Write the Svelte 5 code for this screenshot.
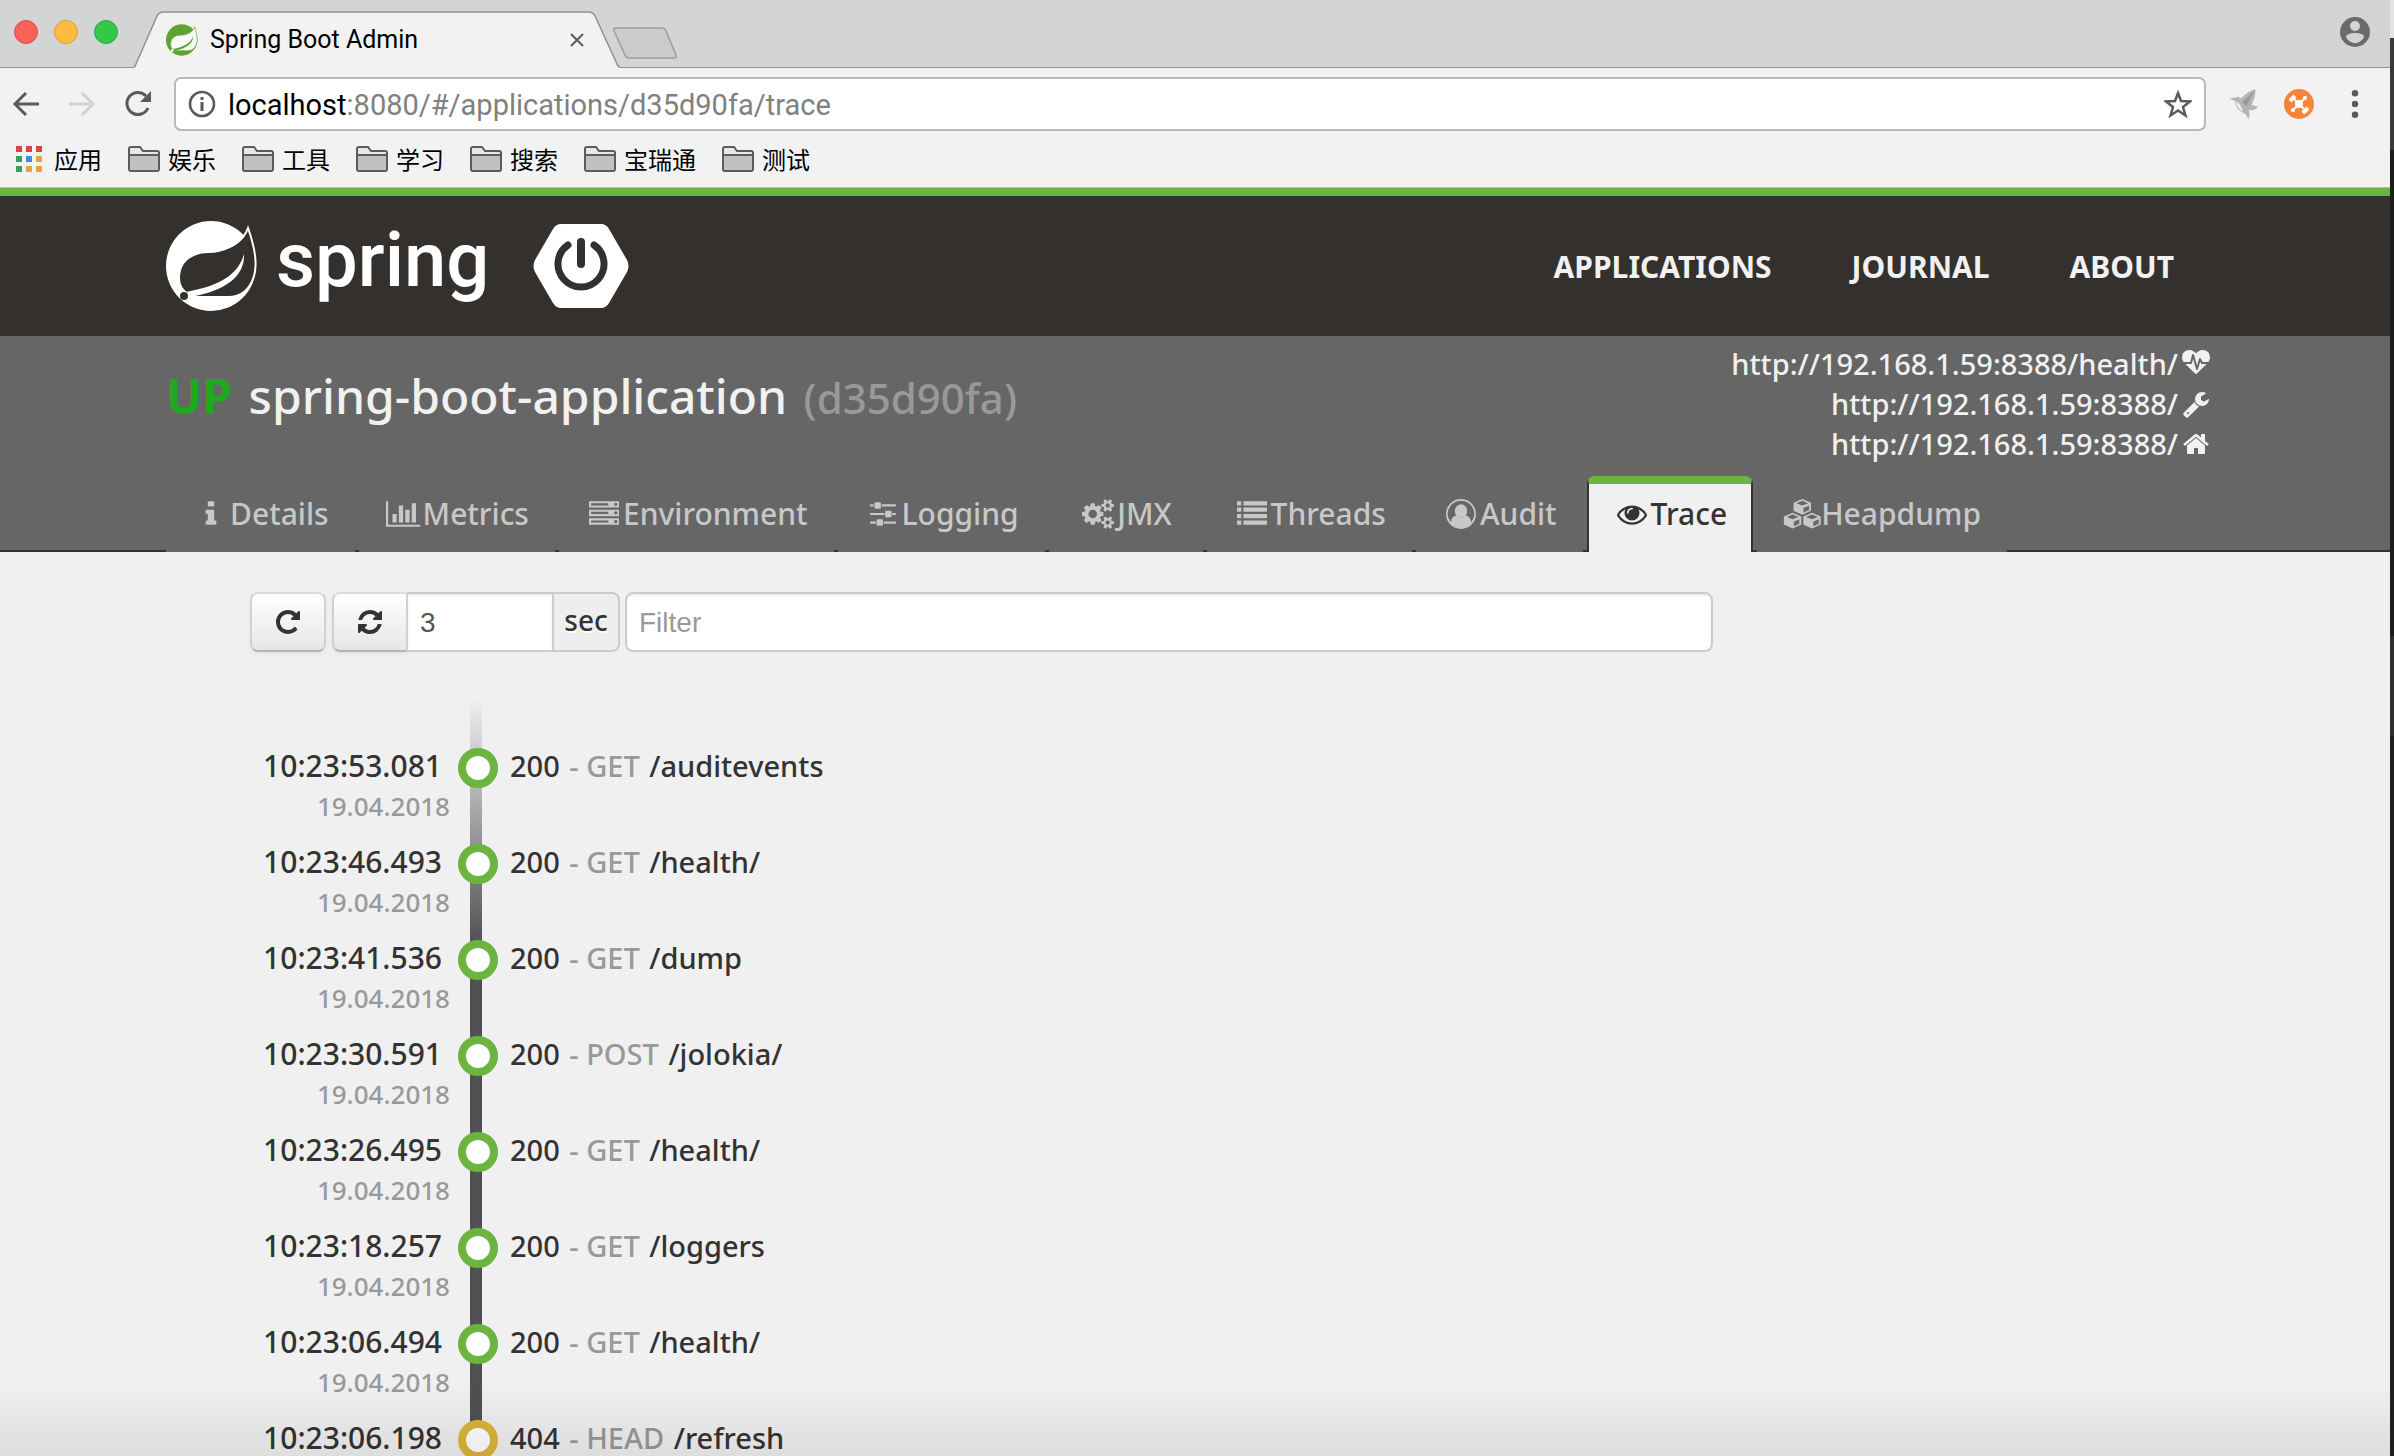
<script lang="ts">
  type Icon = { width: number; d: string };

  type Trace = {
    time: string;
    status: number;
    method: string;
    path: string;
  };

  const cube = (x: number, y: number) =>
    `M${x} ${y}m0-450l520 220v480l-520 240l-520-240v-480z` +
    `m0 110l-350 140l350 140l350-140zm75 430v270l330-150v-270z`;

  const smallGear =
    "v140q0 16-149 31-12 27-30 52 51 113 51 138 0 4-4 7-122 71-124 71-8 0-46-47t-52-68q-20 2-30 2t-30-2q-14 21-52 68t-46 47q-2 0-124-71-4-3-4-7 0-25 51-138-18-25-30-52-149-15-149-31v-140q0-16 149-31 13-29 30-52-51-113-51-138 0-4 4-7 4-2 35-20t59-34 30-16q8 0 46 46.5t52 67.5q20-2 30-2t30 2q51-71 92-112l6-2q4 0 124 70 4 3 4 7 0 25-51 138 17 23 30 52 149 15 149 31z";

  const icons: Record<string, Icon> = {
    info: {
      width: 1792,
      d: "M1216 1344v128q0 26-19 45t-45 19h-512q-26 0-45-19t-19-45v-128q0-26 19-45t45-19h64v-384h-64q-26 0-45-19t-19-45v-128q0-26 19-45t45-19h384q26 0 45 19t19 45v576h64q26 0 45 19t19 45zm-128-1152v192q0 26-19 45t-45 19h-256q-26 0-45-19t-19-45v-192q0-26 19-45t45-19h256q26 0 45 19t19 45z",
    },
    chart: {
      width: 2048,
      d: "M640 896v512h-256v-512h256zm384-512v1024h-256v-1024h256zm1024 1152v128h-2048v-1536h128v1408h1920zm-640-896v768h-256v-768h256zm384-384v1152h-256v-1152h256z",
    },
    server: {
      width: 1792,
      d: "M128 1408h1024v-128h-1024v128zm0-512h1024v-128h-1024v128zm1568 448q0-40-28-68t-68-28-68 28-28 68 28 68 68 28 68-28 28-68zm-1568-960h1024v-128h-1024v128zm1568 448q0-40-28-68t-68-28-68 28-28 68 28 68 68 28 68-28 28-68zm0-512q0-40-28-68t-68-28-68 28-28 68 28 68 68 28 68-28 28-68zm96 832v384h-1792v-384h1792zm0-512v384h-1792v-384h1792zm0-512v384h-1792v-384h1792z",
    },
    sliders: {
      width: 1792,
      d: "M128 320h208v128H128zM816 320h848v128H816zM448 192h256q64 0 64 64v256q0 64-64 64H448q-64 0-64-64V256q0-64 64-64zM128 832h848v128H128zM1456 832h208v128h-208zM1088 704h256q64 0 64 64v256q0 64-64 64h-256q-64 0-64-64V768q0-64 64-64zM128 1344h336v128H128zM944 1344h720v128H944zM576 1216h256q64 0 64 64v256q0 64-64 64H576q-64 0-64-64v-256q0-64 64-64z",
    },
    cogs: {
      width: 1920,
      d:
        "M896 896q0-106-75-181t-181-75-181 75-75 181 75 181 181 75 181-75 75-181zm768 512q0-52-38-90t-90-38-90 38-38 90q0 53 37.5 90.5t90.5 37.5 90.5-37.5 37.5-90.5zm0-1024q0-52-38-90t-90-38-90 38-38 90q0 53 37.5 90.5t90.5 37.5 90.5-37.5 37.5-90.5zm-384 421v185q0 10-7 19.5t-16 10.5l-155 24q-11 35-32 76 34 48 90 115 7 11 7 20 0 12-7 19-23 30-82.5 89.5t-78.5 59.5q-11 0-21-7l-115-90q-37 19-77 31-11 108-23 155-7 24-30 24h-186q-11 0-20-7.5t-10-17.5l-23-153q-34-10-75-31l-118 89q-7 7-20 7-11 0-21-8-144-133-144-160 0-9 7-19 10-14 41-53t47-61q-23-44-35-82l-152-24q-10-1-17-9.5t-7-19.5v-185q0-10 7-19.5t16-10.5l155-24q11-35 32-76-34-48-90-115-7-11-7-20 0-12 7-20 22-30 82-89t79-59q11 0 21 7l115 90q34-18 77-32 11-108 23-154 7-24 30-24h186q11 0 20 7.5t10 17.5l23 153q34 10 75 31l118-89q8-7 20-7 11 0 21 8 144 133 144 160 0 8-7 19-12 16-42 54t-45 60q23 48 34 82l152 23q10 2 17 10.5t7 19.5z" +
        `M1920 1338${smallGear}M1920 314${smallGear}`,
    },
    list: {
      width: 1792,
      d: "M0 128h256v256H0zM384 128h1408v256H384zM0 512h256v256H0zM384 512h1408v256H384zM0 896h256v256H0zM384 896h1408v256H384zM0 1280h256v256H0zM384 1280h1408v256H384z",
    },
    user: {
      width: 1792,
      d: "M896 0a896 896 0 1 1 0 1792a896 896 0 1 1 0-1792zM896 110a786 786 0 0 0-610 1282c40-250 150-390 320-410a420 420 0 0 0 580 0c170 20 280 160 320 410a786 786 0 0 0-610-1282zM896 320a370 400 0 1 1 0 800a370 400 0 1 1 0-800z",
    },
    eye: {
      width: 1792,
      d: "M1664 960q-152-236-381-353 61 104 61 225 0 185-131.5 316.5t-316.5 131.5-316.5-131.5-131.5-316.5q0-121 61-225-229 117-381 353 133 205 333.5 326.5t434.5 121.5 434.5-121.5 333.5-326.5zm-720-384q0-20-14-34t-34-14q-125 0-214.5 89.5t-89.5 214.5q0 20 14 34t34 14 34-14 14-34q0-86 61-147t147-61q20 0 34-14t14-34zm848 384q0 34-20 69-140 230-376.5 368.5t-499.5 138.5-499.5-139-376.5-368q-20-35-20-69t20-69q140-229 376.5-368t499.5-139 499.5 139 376.5 368q20 35 20 69z",
    },
    cubes: {
      width: 2304,
      d: cube(1152, 450) + cube(570, 1270) + cube(1734, 1270),
    },
    heartbeat: {
      width: 1792,
      d: "M1280 896h305q-5 6-10 10.5t-9 7.5l-3 4-623 600q-18 18-44 18t-44-18l-624-602q-5-2-21-20h369q22 0 39.5-13.5t22.5-34.5l70-281 190 667q6 20 23 33t39 13q21 0 38-13t23-33l146-485 56 112q18 35 57 35zm512-428q0 145-103 300h-369l-111-221q-8-17-25.5-27t-36.5-8q-45 5-56 46l-129 430-196-686q-6-20-23.5-33t-39.5-13-39 13.5-22 34.5l-116 464h-423q-103-155-103-300 0-220 127-344t351-124q62 0 126.5 21.5t120 58 95.5 68.5 76 68q36-36 76-68t95.5-68.5 120-58 126.5-21.5q224 0 351 124t127 344z",
    },
    wrench: {
      width: 1792,
      d: "M448 1472q0-26-19-45t-45-19-45 19-19 45 19 45 45 19 45-19 19-45zm644-420l-682 682q-37 37-90 37-52 0-91-37l-106-108q-38-36-38-90 0-53 38-91l681-681q39 98 114.5 173.5t173.5 114.5zm634-435q0 39-23 106-47 134-164.5 217.5t-258.5 83.5q-185 0-316.5-131.5t-131.5-316.5 131.5-316.5 316.5-131.5q58 0 121.5 16.5t107.5 46.5q16 11 16 28t-16 28l-293 169v224l193 107q5-3 79-48.5t135.5-81 70.5-35.5q15 0 23.5 10t8.5 25z",
    },
    home: {
      width: 1792,
      d: "M1472 992v480q0 26-19 45t-45 19h-384v-384h-256v384h-384q-26 0-45-19t-19-45v-480q0-1 .5-3t.5-3l575-474 575 474q1 2 1 6zm223-69l-62 74q-8 9-21 11h-3q-13 0-21-7l-692-577-692 577q-12 8-24 7-13-2-21-11l-62-74q-8-10-7-23.5t11-21.5l719-599q32-26 76-26t76 26l244 204v-195q0-14 9-23t23-9h192q14 0 23 9t9 23v408l219 182q10 8 11 21.5t-7 23.5z",
    },
    repeat: {
      width: 1792,
      d: "M1664 256v448q0 26-19 45t-45 19h-448q-42 0-59-40-17-39 14-69l138-138q-148-137-349-137-104 0-198.5 40.5t-163.5 109.5-109.5 163.5-40.5 198.5 40.5 198.5 109.5 163.5 163.5 109.5 198.5 40.5q119 0 225-52t179-147q7-10 23-12 15 0 25 9l137 138q9 8 9.5 20.5t-7.5 22.5q-109 132-264 204.5t-327 72.5q-156 0-298-61t-245-164-164-245-61-298 61-298 164-245 245-164 298-61q147 0 284.5 55.5t244.5 156.5l130-129q29-31 70-14 39 17 39 59z",
    },
    refresh: {
      width: 1792,
      d: "M1639 1056q0 5-1 7-64 268-268 434.5t-478 166.5q-146 0-282.5-55t-243.5-157l-129 129q-19 19-45 19t-45-19-19-45v-448q0-26 19-45t45-19h448q26 0 45 19t19 45-19 45l-137 137q71 66 161 102t187 36q134 0 250-65t186-179q11-17 53-117 8-23 30-23h192q13 0 22.5 9.5t9.5 22.5zm25-800v448q0 26-19 45t-45 19h-448q-26 0-45-19t-19-45 19-45l138-138q-148-137-349-137-134 0-250 65t-186 179q-11 17-53 117-8 23-30 23h-199q-13 0-22.5-9.5t-9.5-22.5v-7q65-268 270-434.5t480-166.5q146 0 284 55.5t245 156.5l130-129q19-19 45-19t45 19 19 45z",
    },
  };

  const bookmarks = ["娱乐", "工具", "学习", "搜索", "宝瑞通", "测试"];

  const appColors = [
    "#de4141", "#de4141", "#de4141",
    "#3f9a5f", "#3b8de0", "#e8a33a",
    "#3f9a5f", "#e8a33a", "#e8a33a",
  ];

  const links = [
    { url: "http://192.168.1.59:8388/health/", icon: "heartbeat" },
    { url: "http://192.168.1.59:8388/", icon: "wrench" },
    { url: "http://192.168.1.59:8388/", icon: "home" },
  ];

  const tabs = [
    { label: "Details", icon: "info" },
    { label: "Metrics", icon: "chart" },
    { label: "Environment", icon: "server" },
    { label: "Logging", icon: "sliders" },
    { label: "JMX", icon: "cogs" },
    { label: "Threads", icon: "list" },
    { label: "Audit", icon: "user" },
    { label: "Trace", icon: "eye" },
    { label: "Heapdump", icon: "cubes" },
  ];

  const traces: Trace[] = [
    { time: "10:23:53.081", status: 200, method: "GET", path: "/auditevents" },
    { time: "10:23:46.493", status: 200, method: "GET", path: "/health/" },
    { time: "10:23:41.536", status: 200, method: "GET", path: "/dump" },
    { time: "10:23:30.591", status: 200, method: "POST", path: "/jolokia/" },
    { time: "10:23:26.495", status: 200, method: "GET", path: "/health/" },
    { time: "10:23:18.257", status: 200, method: "GET", path: "/loggers" },
    { time: "10:23:06.494", status: 200, method: "GET", path: "/health/" },
    { time: "10:23:06.198", status: 404, method: "HEAD", path: "/refresh" },
  ];

  let activeTab = $state("Trace");
  let interval = $state("3");
  let filter = $state("");

  const visible = $derived(
    traces.filter((t) => `${t.status} ${t.method} ${t.path}`.includes(filter))
  );
</script>

{#snippet icon(name: string)}
  <svg class="icon" viewBox="0 0 {icons[name].width} 1792" aria-hidden="true">
    <path d={icons[name].d} fill-rule={name === "cubes" || name === "user" ? "evenodd" : "nonzero"} />
  </svg>
{/snippet}

{#snippet leaf(disc: string, blade: string, edge: string)}
  <svg class="leaf" viewBox="0 0 92 92" aria-hidden="true">
    <circle cx="45" cy="46" r="45" fill={disc} />
    <path
      d="M82 8C77 22 66 28 52 31C44 33 38 31 30 34C19 38 13 47 13 58C13 66 17 71 22 74L28 77H62C76 77 84 69 88 56C92 43 88 25 82 8Z"
      fill={blade}
      stroke={edge}
      stroke-width="2"
    />
    <path d="M78 34C73 52 58 65 20 72L24 77C60 71 79 56 78 34Z" fill={disc} />
    <circle cx="18" cy="76" r="4" fill={blade} />
  </svg>
{/snippet}

<div class="desktop">
  <div class="window">
    <div class="tabstrip">
      <div class="lights">
        <button class="light red" aria-label="Close window"></button>
        <button class="light yellow" aria-label="Minimize window"></button>
        <button class="light green" aria-label="Zoom window"></button>
      </div>
      <div class="browser-tab">
        <svg class="tab-shape" viewBox="0 0 486 57" preserveAspectRatio="none" aria-hidden="true">
          <path d="M0 57L2 53L23 5Q25 1 29 1H455Q459 1 461 5L483 53L486 57Z" fill="#f2f2f2" />
          <path d="M0 56Q1 56 2 53L23 5Q25 1 29 1H455Q459 1 461 5L483 53Q484 56 486 56" fill="none" stroke="#8f9193" stroke-width="1.5" />
        </svg>
        <span class="favicon">{@render leaf("#5fa134", "#f8fbf5", "#5fa134")}</span>
        <span class="tab-title">Spring Boot Admin</span>
        <button class="tab-close" aria-label="Close tab">
          <svg viewBox="0 0 14 14"><path d="M1 1L13 13M13 1L1 13" /></svg>
        </button>
      </div>
      <button class="new-tab" aria-label="New tab">
        <svg viewBox="0 0 66 33">
          <path d="M4 1H50Q53 1 54 4L64 28Q65 31 62 31H17Q14 31 13 28L2 4Q1 1 4 1Z" />
        </svg>
      </button>
      <button class="profile" aria-label="Profile">
        <svg viewBox="0 0 30 30">
          <circle cx="15" cy="15" r="15" fill="#6b6b6b" />
          <circle cx="15" cy="9" r="5" fill="#d3d4d5" />
          <path d="M6 20C6 17 11 16 15 16S24 17 24 20C22 24 18 26 15 26S8 24 6 20Z" fill="#d3d4d5" />
        </svg>
      </button>
    </div>

    <div class="toolbar">
      <button class="tool" aria-label="Back">
        <svg viewBox="0 0 28 28"><path d="M27 14H3M14 3L3 14L14 25" stroke="#5a5a5a" stroke-width="3" fill="none" /></svg>
      </button>
      <button class="tool" aria-label="Forward">
        <svg viewBox="0 0 28 28"><path d="M1 14H25M14 3L25 14L14 25" stroke="#d3d3d3" stroke-width="3" fill="none" /></svg>
      </button>
      <button class="tool" aria-label="Reload">
        <svg viewBox="0 0 28 28">
          <path d="M24 18A11 11 0 1 1 22 6" stroke="#5a5a5a" stroke-width="3" fill="none" />
          <path d="M27 1V12H16Z" fill="#5a5a5a" />
        </svg>
      </button>
      <div class="omnibox">
        <svg class="site-info" viewBox="0 0 28 28">
          <circle cx="14" cy="14" r="12" fill="none" stroke="#5a5a5a" stroke-width="2.6" />
          <path d="M14 12V21M14 7V10" stroke="#5a5a5a" stroke-width="3" />
        </svg>
        <span class="url"><b>localhost</b>:8080/#/applications/d35d90fa/trace</span>
        <button class="tool" aria-label="Bookmark this page">
          <svg viewBox="0 0 28 28">
            <path
              d="M14 3L17 11L26 11.5L19 17L21.5 25.5L14 20.5L6.5 25.5L9 17L2 11.5L11 11Z"
              fill="none"
              stroke="#5a5a5a"
              stroke-width="2.5"
            />
          </svg>
        </button>
      </div>
      <div class="extensions">
        <button class="tool" aria-label="Bird extension">
          <svg viewBox="0 0 32 32">
            <path d="M1 10L8 9Q11 7 14 10Q19 4 29 0Q30 9 25 17L32 19Q28 24 22 22Q24 27 22 32Q19 26 14 24Q8 21 8 13Z" fill="#b5b5b5" />
            <path d="M9 13Q14 16 16 24Q9 21 9 13Z" fill="#ededed" />
            <path d="M15 14L29 1Q24 8 20 18Z" fill="#989898" />
          </svg>
        </button>
        <button class="tool" aria-label="Proxy extension">
          <svg viewBox="0 0 30 30">
            <circle cx="15" cy="15" r="15" fill="#f5853b" />
            <path d="M10 10L20 20M20 10L10 20" stroke="#fff" stroke-width="2" />
            <circle cx="15" cy="15" r="4" fill="#fff" />
            <path d="M6 12L11 7M19 24L24 19" stroke="#fff" stroke-width="4" />
            <circle cx="21" cy="9" r="2" fill="#fff" />
            <circle cx="9" cy="21" r="2" fill="#fff" />
          </svg>
        </button>
        <button class="tool" aria-label="Menu">
          <svg viewBox="0 0 28 28" fill="#5a5a5a">
            <circle cx="14" cy="4" r="3" /><circle cx="14" cy="14" r="3" /><circle cx="14" cy="24" r="3" />
          </svg>
        </button>
      </div>
    </div>

    <nav class="bookmarks">
      <a class="bookmark" href="#apps">
        <span class="apps">
          {#each appColors as color}<i style="background: {color}"></i>{/each}
        </span>
        应用
      </a>
      {#each bookmarks as name}
        <a class="bookmark" href="#{name}">
          <svg class="folder" viewBox="0 0 32 26" aria-hidden="true">
            <path d="M1 23V3Q1 1 3 1H12L15 5H29Q31 5 31 7V23Q31 25 29 25H3Q1 25 1 23Z" fill="#e8e8e8" stroke="#5c5c5c" stroke-width="2" />
            <path d="M2 9H30V24H2Z" fill="#c1c1c1" />
            <path d="M1 9H31" stroke="#5c5c5c" stroke-width="2" />
          </svg>
          {name}
        </a>
      {/each}
    </nav>

    <header class="navbar">
      <a class="brand" href="#/" aria-label="Spring Boot Admin">
        {@render leaf("#fff", "#34302d", "#fff")}
        <span class="wordmark">spring</span>
        <svg class="boot" viewBox="0 0 96 84" aria-hidden="true">
          <path d="M28 0H68Q73 0 76 5L94 36Q97 42 94 48L76 79Q73 84 68 84H28Q23 84 20 79L2 48Q-1 42 2 36L20 5Q23 0 28 0Z" fill="#fff" />
          <path d="M35 21A23 23 0 1 0 61 21" fill="none" stroke="#34302d" stroke-width="7" stroke-linecap="round" />
          <path d="M48 18V40" stroke="#34302d" stroke-width="8" stroke-linecap="round" />
        </svg>
      </a>
      <nav class="menu">
        <a href="#/">APPLICATIONS</a>
        <a href="#/events">JOURNAL</a>
        <a href="#/about">ABOUT</a>
      </nav>
    </header>

    <section class="subheader">
      <div class="instance">
        <h2>
          <span class="status">UP</span> spring-boot-application <small>(d35d90fa)</small>
        </h2>
        <ul class="links">
          {#each links as link}
            <li>
              <a href={link.url}>{link.url}<span class="fw">{@render icon(link.icon)}</span></a>
            </li>
          {/each}
        </ul>
      </div>
      <div class="tabs">
        {#each tabs as tab}
          <button class="tab" class:active={activeTab === tab.label} onclick={() => (activeTab = tab.label)}>
            <span class="fw">{@render icon(tab.icon)}</span>{tab.label}
          </button>
        {/each}
      </div>
    </section>

    <main>
      <form class="controls" onsubmit={(e) => e.preventDefault()}>
        <button class="btn" type="button" aria-label="Reload traces">{@render icon("repeat")}</button>
        <div class="group">
          <button class="btn" type="button" aria-label="Auto reload">{@render icon("refresh")}</button>
          <input class="interval" type="text" aria-label="Reload interval in seconds" bind:value={interval} />
          <span class="addon">sec</span>
        </div>
        <input class="filter" type="text" placeholder="Filter" aria-label="Filter" bind:value={filter} />
      </form>

      <ul class="timeline">
        {#each visible as trace}
          <li>
            <div class="when">
              <time>{trace.time}</time>
              <small>19.04.2018</small>
            </div>
            <span class="dot" class:warning={trace.status >= 400}></span>
            <div class="what">
              {trace.status} <span class="muted">- {trace.method}</span> {trace.path}
            </div>
          </li>
        {/each}
      </ul>
    </main>
    <div class="dock-shadow"></div>
  </div>
  <div class="behind"></div>
</div>

<style>
  :global(body) {
    margin: 0;
    background: #f0f0f0;
  }

  .desktop {
    display: flex;
    height: 100vh;
    overflow: hidden;
    font-family: "Noto Sans", "Open Sans", sans-serif;
    font-weight: 500;
    color: #333;
  }

  .window {
    position: relative;
    flex: 1;
    min-width: 0;
    overflow: hidden;
    background: #f0f0f0;
  }

  .behind {
    width: 4px;
    background: linear-gradient(
      #e4e4e4 38px,
      #3a3a3a 38px 150px,
      #1d1d1d 150px 636px,
      #303030 636px 736px,
      #202020 736px
    );
  }

  button {
    padding: 0;
    border: 0;
    background: none;
    font: inherit;
    color: inherit;
  }

  a {
    color: inherit;
    text-decoration: none;
  }

  ul {
    margin: 0;
    padding: 0;
    list-style: none;
  }

  svg {
    display: block;
  }

  /* browser chrome */
  .tabstrip {
    display: flex;
    align-items: flex-end;
    height: 68px;
    box-sizing: border-box;
    background: linear-gradient(#8f9193, #8f9193) bottom / 100% 1px no-repeat #d3d4d5;
  }

  .lights {
    display: flex;
    gap: 16px;
    padding: 0 16px 24px 14px;
  }

  .light {
    width: 24px;
    height: 24px;
    box-sizing: border-box;
    border: 1px solid #e2463f;
    border-radius: 50%;
    background: #fc605b;
  }

  .light.yellow {
    border-color: #dfa023;
    background: #fdbc40;
  }

  .light.green {
    border-color: #24a937;
    background: #34c84a;
  }

  .browser-tab {
    position: relative;
    display: flex;
    align-items: center;
    width: 486px;
    height: 57px;
    box-sizing: border-box;
    padding: 0 36px 0 32px;
  }

  .tab-shape {
    position: absolute;
    inset: 0;
    width: 100%;
    height: 100%;
  }

  .favicon {
    position: relative;
    width: 32px;
  }

  .favicon .leaf {
    width: 32px;
    height: 32px;
  }

  .tab-title {
    position: relative;
    flex: 1;
    padding-left: 12px;
    font: 25px/32px Roboto, sans-serif;
    color: #000;
  }

  .tab-close {
    position: relative;
  }

  .tab-close svg {
    width: 14px;
    height: 14px;
    stroke: #5a5a5a;
    stroke-width: 2;
  }

  .new-tab svg {
    width: 66px;
    height: 33px;
    fill: #cbcbcb;
    stroke: #9d9d9d;
    stroke-width: 1.5;
  }

  .new-tab {
    margin: 0 0 8px -8px;
  }

  .profile {
    margin: 0 20px 21px auto;
  }

  .profile svg {
    width: 30px;
    height: 30px;
  }

  .toolbar {
    display: flex;
    align-items: center;
    gap: 28px;
    height: 72px;
    padding: 0 20px 0 12px;
    background: #f2f2f2;
  }

  .tool svg,
  .site-info {
    width: 28px;
    height: 28px;
  }

  .omnibox {
    display: flex;
    flex: 1;
    align-items: center;
    gap: 12px;
    height: 54px;
    box-sizing: border-box;
    margin-left: -6px;
    padding: 0 12px;
    border: 2px solid #b8b8b8;
    border-radius: 7px;
    background: #fff;
  }

  .url {
    flex: 1;
    padding-top: 2px;
    font: 29px/36px Roboto, sans-serif;
    color: #808080;
  }

  .url b {
    font-weight: 400;
    color: #000;
  }

  .extensions {
    display: flex;
    gap: 26px;
    margin-left: -6px;
  }

  .extensions .tool svg {
    width: 30px;
    height: 30px;
  }

  .bookmarks {
    display: flex;
    align-items: center;
    gap: 26px;
    height: 37px;
    padding: 0 16px 10px;
    border-bottom: 1px solid #b9b9b9;
    background: #f2f2f2;
  }

  .bookmark {
    display: flex;
    align-items: center;
    gap: 8px;
    font: 24px/36px "Noto Sans CJK SC", sans-serif;
    color: #000;
  }

  .apps {
    display: grid;
    grid-template-columns: repeat(3, 6px);
    gap: 4px;
    padding-right: 4px;
  }

  .apps i {
    height: 6px;
  }

  .folder {
    width: 32px;
    height: 26px;
  }

  /* application header */
  .navbar {
    display: flex;
    align-items: center;
    justify-content: space-between;
    height: 140px;
    padding: 0 216px 0 166px;
    border-top: 8px solid #6db33f;
    background: #34302d;
    color: #f1f1f1;
  }

  .brand {
    display: flex;
    align-items: center;
  }

  .brand .leaf {
    width: 92px;
    height: 92px;
  }

  .wordmark {
    margin: 0 44px 0 18px;
    padding-bottom: 12px;
    font: 500 76px/88px Roboto, sans-serif;
    color: #fff;
  }

  .boot {
    width: 96px;
    height: 84px;
  }

  .menu {
    display: flex;
    gap: 80px;
    font-size: 30px;
    font-weight: 700;
  }

  .subheader {
    background: #666;
    color: #f1f1f1;
  }

  .instance {
    display: flex;
    justify-content: space-between;
    height: 132px;
    padding: 8px 176px 0 166px;
  }

  h2 {
    margin: 0;
    padding-top: 16px;
    font-size: 48px;
    font-weight: 500;
    line-height: 72px;
  }

  h2 small {
    margin-left: 4px;
    font-size: 42px;
    color: #999;
  }

  .status {
    margin-right: 4px;
    font-weight: 700;
    color: #1ea91e;
  }

  .links a {
    display: flex;
    align-items: center;
    justify-content: flex-end;
    font-size: 29px;
    line-height: 40px;
  }

  .fw {
    display: flex;
    justify-content: center;
    width: 38px;
  }

  .links .fw {
    width: 36px;
  }

  .links .icon {
    height: 28px;
  }

  .icon {
    flex: none;
    height: 30px;
    fill: currentColor;
  }

  .tabs {
    display: flex;
    gap: 4px;
    height: 76px;
    background: linear-gradient(#333, #333) bottom / 100% 2px no-repeat;
    padding-left: 166px;
  }

  .tab {
    display: flex;
    align-items: center;
    justify-content: center;
    min-width: 154px;
    box-sizing: border-box;
    padding: 0 24px 8px;
    border: 2px solid transparent;
    border-top: 8px solid transparent;
    border-bottom: 0;
    border-radius: 8px 8px 0 0;
    background: #666;
    font-size: 30px;
    line-height: 40px;
    color: #c8c8c8;
  }

  .tab.active {
    border-color: #6db33f #333 #333;
    background: #f0f0f0;
    color: #333;
  }

  /* trace view */
  main {
    padding: 40px 250px 0;
  }

  .controls {
    display: flex;
    gap: 6px;
  }

  .group {
    display: flex;
  }

  .btn {
    display: grid;
    place-items: center;
    width: 76px;
    height: 60px;
    box-sizing: border-box;
    border: 2px solid #ccc;
    border-color: #dcdcdc #d0d0d0 #b3b3b3;
    border-radius: 8px;
    background: linear-gradient(#fff, #e6e6e6);
    box-shadow: 0 2px 4px rgba(0, 0, 0, 0.05);
  }

  .btn .icon {
    height: 28px;
  }

  .group .btn {
    border-radius: 8px 0 0 8px;
  }

  input {
    height: 60px;
    box-sizing: border-box;
    padding: 2px 12px 0;
    border: 2px solid #ccc;
    background: #fff;
    box-shadow: inset 0 2px 2px rgba(0, 0, 0, 0.075);
    font: 28px/40px "Liberation Sans", sans-serif;
    color: #555;
  }

  input::placeholder {
    color: #999;
  }

  .interval {
    width: 146px;
    border-left: 0;
  }

  .addon {
    width: 66px;
    height: 60px;
    box-sizing: border-box;
    border: 2px solid #ccc;
    border-left: 0;
    border-radius: 0 8px 8px 0;
    background: #eee;
    font-size: 28px;
    line-height: 52px;
    text-align: center;
    text-shadow: 0 2px 0 #fff;
  }

  .filter {
    width: 1088px;
    margin-left: -1px;
    border-radius: 8px;
  }

  .timeline {
    margin-top: 42px;
    padding-top: 52px;
    background: linear-gradient(rgba(80, 80, 80, 0) 4px, #505050 252px) 220px 0 / 12px 100% no-repeat;
  }

  .timeline li {
    display: flex;
    height: 96px;
    font-size: 30px;
    line-height: 40px;
  }

  .when {
    display: flex;
    flex-direction: column;
    align-items: flex-end;
    width: 200px;
  }

  time {
    padding-right: 8px;
  }

  .when small {
    font-size: 26px;
    color: #999;
  }

  .dot {
    width: 40px;
    height: 40px;
    box-sizing: border-box;
    margin: 2px 12px 0 8px;
    border: 8px solid #6db33f;
    border-radius: 50%;
    background: #fff;
  }

  .dot.warning {
    border-color: #dbb53b;
  }

  .what {
    font-size: 29px;
  }

  .muted {
    padding: 0 2px;
    color: #999;
  }

  .dock-shadow {
    position: absolute;
    right: 0;
    bottom: 0;
    left: 0;
    height: 76px;
    background: linear-gradient(transparent, rgba(0, 0, 0, 0.08));
    pointer-events: none;
  }
</style>
